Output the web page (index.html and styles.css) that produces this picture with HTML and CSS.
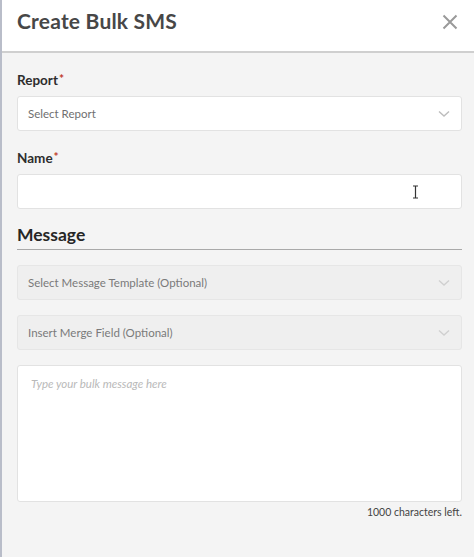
FILE: index.html
```html
<!DOCTYPE html>
<html>
<head>
<meta charset="utf-8">
<link rel="stylesheet" href="styles.css">
</head>
<body>
<div class="panel">
  <header class="header">
    <h1 class="title">Create Bulk SMS</h1>
    <svg class="close" width="16" height="16" viewBox="0 0 16 16"><path d="M1.5 1.5L14.5 14.5M14.5 1.5L1.5 14.5" stroke="#9a9a9a" stroke-width="2" fill="none"/></svg>
  </header>
  <main class="body">
    <div class="field">
      <label class="label">Report<span class="req">*</span></label>
      <div class="select">
        <span class="placeholder">Select Report</span>
        <svg class="chev" width="12" height="8" viewBox="0 0 12 8"><path d="M1 1.5L6 6L11 1.5" stroke="#bdbdbd" stroke-width="1.4" fill="none"/></svg>
      </div>
    </div>
    <div class="field">
      <label class="label">Name<span class="req">*</span></label>
      <div class="input">
        <svg class="cursor" width="7" height="14" viewBox="0 0 7 14"><path d="M1 1H3.5M3.5 1H6M3.5 1V13M1 13H6" stroke="#333" stroke-width="1.2" fill="none"/></svg>
      </div>
    </div>
    <h2 class="section">Message</h2>
    <div class="select disabled">
      <span class="placeholder">Select Message Template (Optional)</span>
      <svg class="chev" width="12" height="8" viewBox="0 0 12 8"><path d="M1 1.5L6 6L11 1.5" stroke="#d0d0d0" stroke-width="1.4" fill="none"/></svg>
    </div>
    <div class="select disabled">
      <span class="placeholder">Insert Merge Field (Optional)</span>
      <svg class="chev" width="12" height="8" viewBox="0 0 12 8"><path d="M1 1.5L6 6L11 1.5" stroke="#d0d0d0" stroke-width="1.4" fill="none"/></svg>
    </div>
    <div class="textarea"><span class="ta-placeholder">Type your bulk message here</span></div>
    <div class="count">1000 characters left.</div>
  </main>
</div>
</body>
</html>
```
FILE: styles.css
```css
html, body {
  margin: 0;
  padding: 0;
  height: 100%;
}
body {
  font-family: Lato, "Liberation Sans", sans-serif;
  background: #f4f4f4;
}
.panel {
  height: 557px;
  border-left: 2px solid #b9bdc9;
  background: #f4f4f4;
  box-sizing: border-box;
}
.header {
  height: 53px;
  background: #fff;
  border-bottom: 2px solid #cfcfcf;
  display: flex;
  align-items: flex-start;
  justify-content: space-between;
  padding: 0 16px 0 15px;
  box-sizing: border-box;
}
.title {
  margin: 8px 0 0;
  font-size: 21px;
  line-height: 26px;
  font-weight: 700;
  color: #474747;
  letter-spacing: 0.2px;
}
.close {
  display: block;
  margin-top: 14px;
}
.body {
  padding: 17px 12px 0 15px;
  display: flex;
  flex-direction: column;
}
.field {
  display: flex;
  flex-direction: column;
}
.label {
  font-size: 13.5px;
  font-weight: 700;
  color: #2d2d2d;
  height: 17px;
  line-height: 17px;
  margin-bottom: 9px;
  margin-top: -2px;
}
.req {
  color: #c0392b;
  font-size: 12px;
  vertical-align: 2px;
  margin-left: 1px;
}
.select, .input {
  height: 33px;
  background: #fff;
  border: 1px solid #e2e2e2;
  border-radius: 3px;
  display: flex;
  align-items: center;
  justify-content: space-between;
  padding: 0 11px 0 10px;
  position: relative;
}
.field:first-child .label { margin-top: 0; }
.field + .field {
  margin-top: 19px;
}
.placeholder {
  font-size: 11.5px;
  color: #6f6f6f;
}
.chev { display: block; }
.input .cursor {
  position: absolute;
  left: 394px;
  top: 10px;
}
.section {
  margin: 15px 0 0;
  font-size: 17.5px;
  font-weight: 700;
  color: #262626;
  padding-bottom: 3px;
  border-bottom: 1px solid #a9a9a9;
  line-height: 22px;
}
.select.disabled {
  background: #efefef;
  border-color: #e6e6e6;
  margin-top: 15px;
}
.select.disabled .placeholder { color: #7a7a7a; }
.textarea {
  margin-top: 15px;
  height: 137px;
  background: #fff;
  border: 1px solid #e2e2e2;
  border-radius: 3px;
  padding: 6px 13px;
  box-sizing: border-box;
}
.ta-placeholder {
  font-size: 11.5px;
  font-style: italic;
  color: #b9b9b9;
}
.count {
  text-align: right;
  font-size: 10.5px;
  color: #444;
  margin-top: 4px;
}
```
